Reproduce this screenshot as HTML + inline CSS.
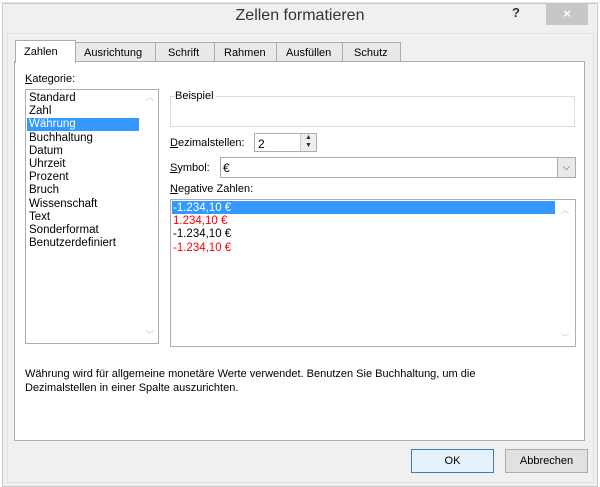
<!DOCTYPE html><html><head><style>
*{margin:0;padding:0;box-sizing:border-box}
body{width:600px;height:487px;background:#fff;position:relative;overflow:hidden;font-family:"Liberation Sans",sans-serif;font-size:11px;color:#000}
.a{position:absolute}
.t{position:absolute;white-space:nowrap;font-size:11px}
u{text-decoration:underline}
</style></head><body>
<div class="a" style="left:0;top:0;width:600px;height:3px;background:#fff;border-bottom:1px solid #e6e6e6"></div>
<div class="a" style="left:2px;top:3px;width:596px;height:484px;background:#f0f0f0;border:1px solid #c8c8c8"></div>
<div class="a" style="left:7px;top:33px;width:587px;height:450px;background:#f0f0f0;border:1px solid #e2e2e2"></div>
<div class="t" style="left:0;width:600px;text-align:center;top:7px;font-size:16px;color:#333">Zellen formatieren</div>
<div class="t" style="left:512px;top:5px;font-size:13px;font-weight:bold;color:#333">?</div>
<div class="a" style="left:546px;top:3px;width:42px;height:22px;background:#c7c7c7;color:#fff;text-align:center;font-weight:bold;font-size:13px;line-height:22px">×</div>
<div class="a" style="left:14px;top:61px;width:571px;height:380px;background:#fff;border:1px solid #adadad"></div>
<div class="a" style="left:66px;top:42px;width:90px;height:20px;background:#e9e9e9;border:1px solid #adadad"></div>
<div class="a" style="left:155px;top:42px;width:60px;height:20px;background:#e9e9e9;border:1px solid #adadad"></div>
<div class="a" style="left:214px;top:42px;width:63px;height:20px;background:#e9e9e9;border:1px solid #adadad"></div>
<div class="a" style="left:276px;top:42px;width:67px;height:20px;background:#e9e9e9;border:1px solid #adadad"></div>
<div class="a" style="left:342px;top:42px;width:59px;height:20px;background:#e9e9e9;border:1px solid #adadad"></div>
<div class="a" style="left:15px;top:40px;width:61px;height:23px;background:#fff;border:1px solid #adadad;border-bottom:none"></div>
<div class="t" style="left:24px;top:46px">Zahlen</div>
<div class="t" style="left:84px;top:47px">Ausrichtung</div>
<div class="t" style="left:168px;top:47px">Schrift</div>
<div class="t" style="left:224px;top:47px">Rahmen</div>
<div class="t" style="left:286px;top:47px">Ausfüllen</div>
<div class="t" style="left:354px;top:47px">Schutz</div>
<div class="t" style="left:25px;top:73px"><u>K</u>ategorie:</div>
<div class="a" style="left:25px;top:89px;width:134px;height:255px;border:1px solid #adadad;background:#fff"></div>
<div class="a" style="left:141px;top:90px;width:17px;height:253px;background:#fff;color:#c8c8c8;font-size:9px;text-align:center">︿</div>
<div class="t" style="left:141px;top:328px;width:17px;text-align:center;color:#c8c8c8;font-size:9px">﹀</div>
<div class="a" style="left:27px;top:118px;width:112px;height:13px;background:#3399ff"></div>
<div class="t" style="left:29px;top:92px;line-height:13.2px;font-size:11.5px">Standard<br>Zahl<br><span style="color:#fff">Währung</span><br>Buchhaltung<br>Datum<br>Uhrzeit<br>Prozent<br>Bruch<br>Wissenschaft<br>Text<br>Sonderformat<br>Benutzerdefiniert</div>
<div class="a" style="left:170px;top:96px;width:405px;height:31px;border:1px solid #dcdcdc"></div>
<div class="t" style="left:175px;top:90px;background:#fff;padding-right:2px">Beispiel</div>
<div class="t" style="left:170px;top:137px"><u>D</u>ezimalstellen:</div>
<div class="a" style="left:254px;top:133px;width:63px;height:19px;border:1px solid #adadad;background:#fff"></div>
<div class="t" style="left:258px;top:137px;font-size:12px">2</div>
<div class="a" style="left:300px;top:134px;width:16px;height:17px;background:#eee;border-left:1px solid #ccc;font-size:7px;line-height:8px;text-align:center;color:#333">▲<br>▼</div>
<div class="t" style="left:170px;top:162px"><u>S</u>ymbol:</div>
<div class="a" style="left:220px;top:157px;width:356px;height:21px;border:1px solid #adadad;background:#fff"></div>
<div class="t" style="left:223px;top:161px;font-size:12px">€</div>
<div class="a" style="left:557px;top:158px;width:18px;height:19px;background:#e9e9e9;border-left:1px solid #adadad;font-size:10px;text-align:center;line-height:19px;color:#444">⌵</div>
<div class="t" style="left:170px;top:183px"><u>N</u>egative Zahlen:</div>
<div class="a" style="left:170px;top:199px;width:406px;height:148px;border:1px solid #adadad;background:#fff"></div>
<div class="a" style="left:172px;top:201px;width:383px;height:13px;background:#3399ff"></div>
<div class="t" style="left:556px;top:203px;width:18px;text-align:center;color:#c8c8c8;font-size:9px">︿</div>
<div class="t" style="left:556px;top:331px;width:18px;text-align:center;color:#c8c8c8;font-size:9px">﹀</div>
<div class="t" style="left:173px;top:202px;line-height:13.2px;font-size:11.5px"><span style="color:#fff">-1.234,10 €</span><br><span style="color:#ff0000">1.234,10 €</span><br>-1.234,10 €<br><span style="color:#ff0000">-1.234,10 €</span></div>
<div class="t" style="left:25px;top:367px;line-height:14px">Währung wird für allgemeine monetäre Werte verwendet. Benutzen Sie Buchhaltung, um die<br>Dezimalstellen in einer Spalte auszurichten.</div>
<div class="a" style="left:411px;top:449px;width:83px;height:24px;border:1px solid #3c7fb1;background:#e5f1fb;text-align:center;line-height:22px">OK</div>
<div class="a" style="left:505px;top:449px;width:83px;height:24px;border:1px solid #adadad;background:#e1e1e1;text-align:center;line-height:22px">Abbrechen</div>
</body></html>
